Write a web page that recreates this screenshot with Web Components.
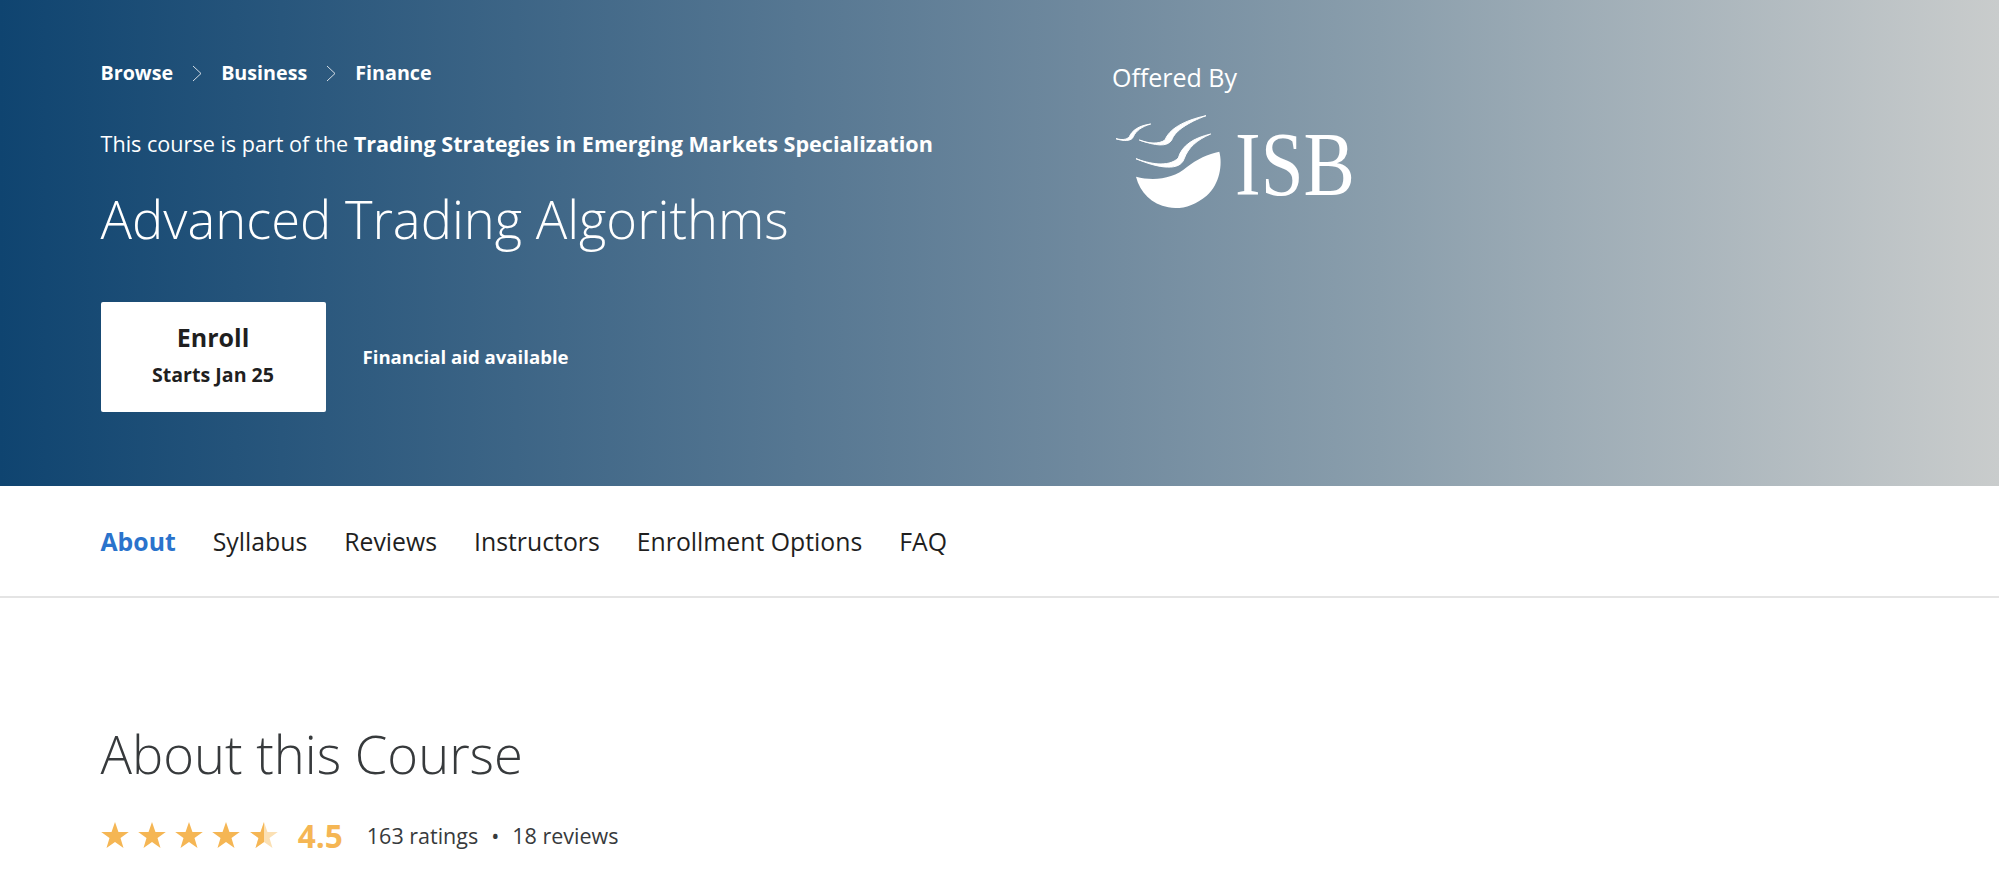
<!DOCTYPE html>
<html lang="en">
<head>
<meta charset="utf-8">
<title>Advanced Trading Algorithms</title>
<style>
  html,body{margin:0;padding:0;background:#fff;}
  body{font-family:"Open Sans",sans-serif;color:#1f1f1f;height:886px;overflow:hidden;}
</style>
</head>
<body>
<course-hero>
  <crumb-trail slot="crumbs"></crumb-trail>
</course-hero>
<course-tabs></course-tabs>
<about-section></about-section>

<script>
class CrumbTrail extends HTMLElement {
  constructor() {
    super();
    this.attachShadow({ mode: "open" });
    const chev = `<svg width="10" height="17" viewBox="0 0 10 17"><path d="M1 1l8 7.5L1 16" fill="none" stroke="#fff" stroke-opacity=".8" stroke-width="1"/></svg>`;
    this.shadowRoot.innerHTML = `
    <style>
      :host{display:flex;align-items:center;gap:19px;font-size:19.7px;line-height:24px;font-weight:700;color:#fff;}
    </style>
    <span>Browse</span>${chev}<span>Business</span>${chev}<span>Finance</span>`;
  }
}
customElements.define("crumb-trail", CrumbTrail);

class IsbLogo extends HTMLElement {
  constructor() {
    super();
    this.attachShadow({ mode: "open" });
    this.shadowRoot.innerHTML = `
    <style>:host{display:block;width:280px;height:112px;}svg{display:block;}</style>
    <svg width="280" height="112" viewBox="0 0 280 112" fill="#fff">
      <g transform="translate(-36 -63.300) scale(.3333)">
        <g stroke="#fff" stroke-width="3" stroke-linejoin="round">
          <path d="M108 264C125 268 140 268 148 258C156 240 175 225 212 220C185 228 168 240 160 258C155 272 130 272 108 264Z"/>
          <path d="M178 268C205 278 235 282 255 268C268 235 310 210 378 195C325 215 285 240 275 268C262 290 225 285 178 268Z"/>
          <path d="M168 324C205 338 265 352 295 322C305 285 340 262 392 250C350 268 325 290 312 325C300 360 240 355 168 324Z"/>
        </g>
        <path d="M168 378C220 392 280 385 320 350C350 325 385 310 418 303C428 340 420 400 380 435C345 465 300 478 265 470C215 460 180 425 168 378Z"/>
      </g>
      <text transform="translate(119 81) scale(.847 1)" font-family="'Liberation Serif',serif" font-size="91">ISB</text>
    </svg>`;
  }
}
customElements.define("isb-logo", IsbLogo);

class CourseHero extends HTMLElement {
  constructor() {
    super();
    this.attachShadow({ mode: "open" });
    this.shadowRoot.innerHTML = `
    <style>
      :host{display:flex;box-sizing:border-box;height:486px;padding:61px 0 0 100.500px;color:#fff;
        background:linear-gradient(90deg,#0f4470 0%,#6f899e 54%,#8a9eac 69%,#c9cccc 100%);}
      .main{width:1011.500px;flex:none;}
      .part{margin-top:44px;font-size:21.6px;line-height:30px;}
      .part b{font-weight:700;}
      h1{margin:25px 0 0;font-size:52.5px;line-height:70px;font-weight:300;}
      .cta{display:flex;align-items:center;gap:37px;margin-top:48px;}
      .enroll{width:225px;height:110px;box-sizing:border-box;background:#fff;border-radius:2px;color:#1f1f1f;
        display:flex;flex-direction:column;align-items:center;justify-content:center;font-weight:700;text-align:center;}
      .enroll .a{font-size:25px;line-height:32px;font-weight:700;margin-top:-6px;}
      .enroll .b{font-size:19.6px;line-height:26px;margin-top:9px;}
      .aid{font-size:18.6px;font-weight:700;margin-top:-2px;}
      .by{font-size:25px;line-height:30px;margin-top:1px;}
      isb-logo{margin:22px 0 0 4px;}
    </style>
    <div class="main">
      <slot name="crumbs"></slot>
      <div class="part">This course is part of the <b>Trading Strategies in Emerging Markets Specialization</b></div>
      <h1>Advanced Trading Algorithms</h1>
      <div class="cta">
        <div class="enroll"><span class="a">Enroll</span><span class="b">Starts Jan 25</span></div>
        <span class="aid">Financial aid available</span>
      </div>
    </div>
    <div class="side">
      <div class="by">Offered By</div>
      <isb-logo></isb-logo>
    </div>`;
  }
}
customElements.define("course-hero", CourseHero);

class CourseTabs extends HTMLElement {
  constructor() {
    super();
    this.attachShadow({ mode: "open" });
    const tabs = ["About", "Syllabus", "Reviews", "Instructors", "Enrollment Options", "FAQ"];
    this.shadowRoot.innerHTML = `
    <style>
      :host{display:flex;align-items:center;gap:37px;box-sizing:border-box;height:112px;padding:0 0 0 100.500px;
        border-bottom:2px solid #e4e4e4;font-size:24.8px;color:#1f1f1f;}
      .on{color:#2a73cc;font-weight:700;}
    </style>
    ${tabs.map((t, i) => `<span class="${i ? "" : "on"}">${t}</span>`).join("")}`;
  }
}
customElements.define("course-tabs", CourseTabs);

class StarRating extends HTMLElement {
  constructor() {
    super();
    this.attachShadow({ mode: "open" });
    const d = "M13 1l3.2 9.1h9.6l-7.7 5.8 2.8 9.2L13 19.6l-7.9 5.5 2.800-9.200L.2 10.100h9.600z";
    const star = `<svg width="28" height="28" viewBox="0 0 26 26"><path d="${d}" fill="#f5b654"/></svg>`;
    const half = `<svg width="28" height="28" viewBox="0 0 26 26"><defs><clipPath id="l"><rect width="13" height="26"/></clipPath></defs><path d="${d}" fill="#fbe0b4"/><path d="${d}" fill="#f5b654" clip-path="url(#l)"/></svg>`;
    this.shadowRoot.innerHTML = `
    <style>
      :host{display:flex;align-items:center;height:40px;}
      .stars{display:flex;gap:9.3px;}
      svg{display:block;}
      .val{margin-left:20px;font-size:31.6px;font-weight:700;color:#f5b654;}
      .meta{margin-left:24px;font-size:21.5px;color:#373a3c;display:flex;gap:13px;}
    </style>
    <div class="stars">${star}${star}${star}${star}${half}</div>
    <span class="val">4.5</span>
    <div class="meta"><span>163 ratings</span><span>•</span><span>18 reviews</span></div>`;
  }
}
customElements.define("star-rating", StarRating);

class AboutSection extends HTMLElement {
  constructor() {
    super();
    this.attachShadow({ mode: "open" });
    this.shadowRoot.innerHTML = `
    <style>
      :host{display:block;padding:120px 0 0 100.500px;}
      h2{margin:0 0 25px;font-size:52.5px;line-height:72px;font-weight:300;color:#373a3c;}
    </style>
    <h2>About this Course</h2>
    <star-rating></star-rating>`;
  }
}
customElements.define("about-section", AboutSection);
</script>
</body>
</html>
